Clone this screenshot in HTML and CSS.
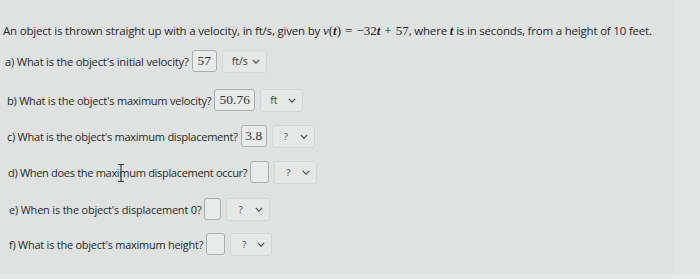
FILE: index.html
```html
<!DOCTYPE html>
<html>
<head>
<meta charset="utf-8">
<link rel="stylesheet" href="styles.css">
</head>
<body>
<div class="screen">
  <div class="sheet">
    <p class="intro">An object is thrown straight up with a velocity, in ft/s, given by <span class="math"><i>v</i>(<i class="b">t</i>)<span class="op">=</span>−32<i class="b">t</i><span class="op">+</span>57</span>, where <i class="math b">t</i> is in seconds, from a height of 10 feet.</p>
    <div class="q qa">
      <span class="label">a) What is the object's initial velocity?</span>
      <span class="box w24"><span class="val">57</span></span>
      <span class="sel w44"><span class="opt">ft/s</span><svg class="chev" viewBox="0 0 10 6"><path d="M1 1l4 4 4-4"/></svg></span>
    </div>
    <div class="q qb">
      <span class="label">b) What is the object's maximum velocity?</span>
      <span class="box w40"><span class="val">50.76</span></span>
      <span class="sel w42"><span class="opt">ft</span><svg class="chev" viewBox="0 0 10 6"><path d="M1 1l4 4 4-4"/></svg></span>
    </div>
    <div class="q qc">
      <span class="label">c) What is the object's maximum displacement?</span>
      <span class="box w25"><span class="val">3.8</span></span>
      <span class="sel w42"><span class="opt q-mark">?</span><svg class="chev" viewBox="0 0 10 6"><path d="M1 1l4 4 4-4"/></svg></span>
    </div>
    <div class="q qd">
      <span class="label">d) When does the maximum displacement occur?</span>
      <span class="box w18"></span>
      <span class="sel w42"><span class="opt q-mark">?</span><svg class="chev" viewBox="0 0 10 6"><path d="M1 1l4 4 4-4"/></svg></span>
    </div>
    <div class="q qe">
      <span class="label">e) When is the object's displacement 0?</span>
      <span class="box w17"></span>
      <span class="sel w43"><span class="opt q-mark">?</span><svg class="chev" viewBox="0 0 10 6"><path d="M1 1l4 4 4-4"/></svg></span>
    </div>
    <div class="q qf">
      <span class="label">f) What is the object's maximum height?</span>
      <span class="box w18"></span>
      <span class="sel w41"><span class="opt q-mark">?</span><svg class="chev" viewBox="0 0 10 6"><path d="M1 1l4 4 4-4"/></svg></span>
    </div>
  </div>
  <div class="edge"></div>
</div>
<svg class="cursor" viewBox="0 0 8 20"><path d="M1 1.5h2.5l0.5 0.6 0.5-0.6H7M4 2v16M1 18.5h2.5l0.5-0.6 0.5 0.6H7"/></svg>
</body>
</html>
```
FILE: styles.css
```css
html, body {
  margin: 0;
  padding: 0;
}
body {
  position: relative;
  width: 700px;
  height: 279px;
  overflow: hidden;
  background: #e7e9e9;
  font-family: "Open Sans", "Noto Sans", sans-serif;
  color: #25292b;
}
.screen {
  display: flex;
  height: 274px;
  background: #dfe2e1;
}
.sheet {
  flex: 1;
  padding-top: 22px;
}
.edge {
  width: 26px;
  background: #e3e5e5;
}
.intro {
  margin: 0 0 0 3px;
  font-size: 11.5px;
  line-height: 18px;
  white-space: nowrap;
  letter-spacing: -0.19px;
}
.math {
  font-family: "Liberation Serif", "DejaVu Serif", serif;
  font-size: 13px;
  letter-spacing: 0;
}
.op { margin: 0 4px; }
.math i, i.math {
  font-style: italic;
}
.b { font-weight: bold; }
.q {
  display: flex;
  align-items: center;
  height: 24px;
  font-size: 11.2px;
  letter-spacing: -0.2px;
}
.label { white-space: nowrap; margin-right: 3px; }
.qa { margin: 9px 0 0 5px; }
.qb { margin: 15px 0 0 7px; font-size: 11px; letter-spacing: -0.22px; }
.qc { margin: 12px 0 0 7px; font-size: 11.1px; letter-spacing: -0.3px; }
.qd { margin: 12px 0 0 8px; font-size: 11.1px; letter-spacing: -0.35px; }
.qe { margin: 13px 0 0 9px; font-size: 10.9px; letter-spacing: -0.15px; }
.qf { margin: 11px 0 0 9px; font-size: 10.9px; letter-spacing: -0.2px; }
.box {
  box-sizing: border-box;
  height: 22px;
  border: 1px solid #a9aeaf;
  border-radius: 3px;
  background: #e9ebeb;
  display: flex;
  align-items: center;
  justify-content: center;
  margin-right: 5px;
  letter-spacing: 0;
}
.val {
  font-family: "Liberation Serif", "DejaVu Serif", serif;
  font-size: 13.5px;
  color: #333;
}
.sel {
  box-sizing: border-box;
  height: 23px;
  border: 1px solid #d3d6d6;
  border-radius: 3px;
  background: #e6e8e8;
  display: flex;
  align-items: center;
  justify-content: space-between;
  padding: 0 6px 0 9px;
  letter-spacing: 0;
}
.opt { font-size: 10.5px; color: #3a3d3e; }
.q-mark { font-size: 9.5px; padding-left: 2px; }
.chev {
  width: 8px;
  height: 5px;
  fill: none;
  stroke: #4a4e50;
  stroke-width: 1.6;
}
.cursor {
  position: absolute;
  left: 117px;
  top: 163px;
  width: 8px;
  height: 20px;
  fill: none;
  stroke: #3c4042;
  stroke-width: 1.2;
}
.w17 { width: 17px; }
.w18 { width: 19px; }
.w24 { width: 25px; }
.w25 { width: 26px; }
.w40 { width: 41px; }
.w41 { width: 42px; }
.w42 { width: 43px; }
.w43 { width: 44px; }
.w44 { width: 45px; }
```
